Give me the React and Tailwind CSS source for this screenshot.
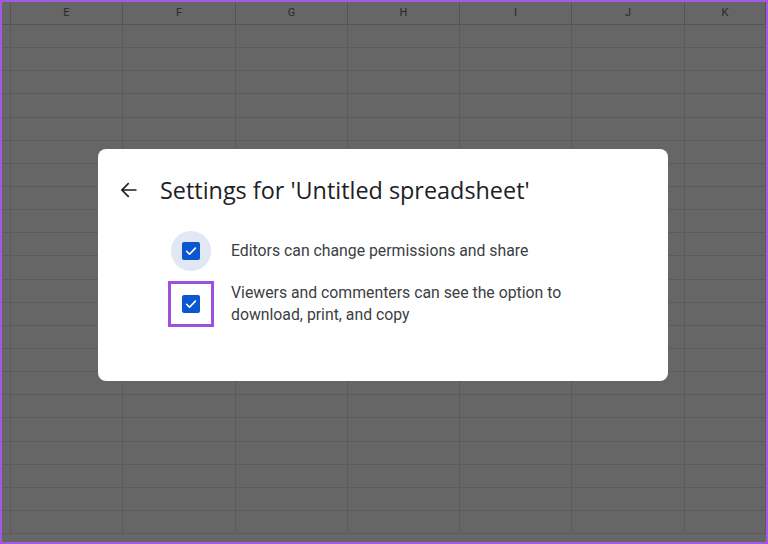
import React from "react";

const cols = ["", "E", "F", "G", "H", "I", "J", "K"];
const rows = Array.from({ length: 22 });

const CheckBox = () => (
  <div className="w-[18px] h-[18px] rounded-[2px] bg-[#0b57d0] flex items-center justify-center">
    <svg width="14" height="14" viewBox="0 0 24 24" fill="none">
      <path d="M4.5 12.5l5 5L19.5 7" stroke="white" strokeWidth="2.8" strokeLinecap="round" strokeLinejoin="round" />
    </svg>
  </div>
);

const App = () => {
  return (
    <div className="relative w-[768px] h-[544px] overflow-hidden border-2 border-[#a15be0] bg-[#666666]" style={{ fontFamily: "Roboto, 'Liberation Sans', sans-serif" }}>
      {/* spreadsheet behind the overlay */}
      <div className="grid grid-cols-[9px_112px_113px_112px_112px_112px_113px_1fr]">
        {cols.map((c, i) => (
          <div key={"h" + i} className="h-[23px] border-r border-b border-[#555555] flex items-center justify-center text-[11px] text-[#2a2a2a]">
            {c}
          </div>
        ))}
        {rows.map((_, r) =>
          cols.map((c, i) => (
            <div key={r + "-" + i} className="h-[23.15px] border-r border-b border-[#5b5b5b]"></div>
          ))
        )}
      </div>

      {/* settings dialog */}
      <div className="absolute left-[96px] top-[147px] w-[570px] h-[232px] rounded-lg bg-white">
        <div className="flex items-center pt-[27px] pl-[21px]">
          <svg width="20" height="20" viewBox="0 0 24 24" fill="none">
            <path d="M20 12H4.5M11 4.5L3.5 12l7.5 7.5" stroke="#202124" strokeWidth="2" strokeLinecap="square" />
          </svg>
          <div className="ml-[21px] text-[23.4px] leading-[28px] text-[#202124] font-['Open_Sans',sans-serif]">Settings for 'Untitled spreadsheet'</div>
        </div>

        <div className="flex flex-col gap-[11px] pt-[27px] pl-[73px]">
          <div className="flex items-center gap-[20px]">
            <div className="w-10 h-10 rounded-full bg-[#e1e7f3] flex items-center justify-center">
              <CheckBox />
            </div>
            <div className="text-[15.8px] leading-[22px] text-[#3c4043]">Editors can change permissions and share</div>
          </div>
          <div className="flex items-start gap-[20px]">
            <div className="relative w-10 h-10 mt-[2px] flex items-center justify-center">
              <div className="absolute -inset-[3px] border-[3px] border-[#9d4fe0]"></div>
              <CheckBox />
            </div>
            <div className="text-[15.8px] leading-[22px] text-[#3c4043]">
              Viewers and commenters can see the option to
              <br />
              download, print, and copy
            </div>
          </div>
        </div>
      </div>
    </div>
  );
};

export default App;
